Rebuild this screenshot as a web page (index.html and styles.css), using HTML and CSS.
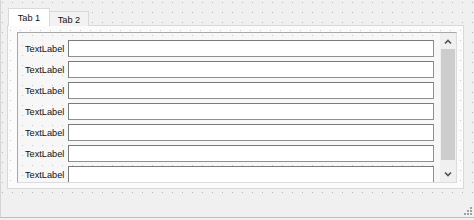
FILE: index.html
```html
<!DOCTYPE html>
<html lang="en">
  <head>
    <meta charset="UTF-8" />
    <title>Form</title>
    <link rel="stylesheet" href="styles.css">
  </head>
  <body>
    <div class="window">
      <div class="central">
        <div class="tabs">
          <div class="tabbar">
            <div class="tab tab_active">Tab 1</div>
            <div class="tab">Tab 2</div>
          </div>
          <div class="pane">
            <div class="scroll">
              <div class="scroll__content">
                <span class="label">TextLabel</span><div class="edit"></div>
                <span class="label">TextLabel</span><div class="edit"></div>
                <span class="label">TextLabel</span><div class="edit"></div>
                <span class="label">TextLabel</span><div class="edit"></div>
                <span class="label">TextLabel</span><div class="edit"></div>
                <span class="label">TextLabel</span><div class="edit"></div>
                <span class="label">TextLabel</span><div class="edit"></div>
              </div>
              <div class="scrollbar">
                <div class="scrollbar__btn">
                  <svg width="8" height="5" viewBox="0 0 8 5"><path d="M1 4.5 L4 1.5 L7 4.5" fill="none" stroke="#555" stroke-width="1.6"/></svg>
                </div>
                <div class="scrollbar__track">
                  <div class="scrollbar__thumb"></div>
                </div>
                <div class="scrollbar__btn">
                  <svg width="8" height="5" viewBox="0 0 8 5"><path d="M1 0.5 L4 3.5 L7 0.5" fill="none" stroke="#555" stroke-width="1.6"/></svg>
                </div>
              </div>
            </div>
          </div>
        </div>
      </div>
      <div class="statusbar">
        <svg class="grip" width="8" height="8" viewBox="0 0 8 8">
          <rect x="6" y="0" width="2" height="2" fill="#a0a0a0"/>
          <rect x="3" y="3" width="2" height="2" fill="#a0a0a0"/>
          <rect x="6" y="3" width="2" height="2" fill="#a0a0a0"/>
          <rect x="0" y="6" width="2" height="2" fill="#a0a0a0"/>
          <rect x="3" y="6" width="2" height="2" fill="#a0a0a0"/>
          <rect x="6" y="6" width="2" height="2" fill="#a0a0a0"/>
        </svg>
      </div>
    </div>
  </body>
</html>
```

FILE: styles.css
```css
:root {
  --bg-color: #f0f0f0;
  --grid-dot: #b9b9b9;
  --tab-border: #d9d9d9;
  --edit-border: #8f8f8f;
}

* {
  box-sizing: border-box;
  margin: 0;
  padding: 0;
}
body {
  font-family: "Liberation Sans", Arial, sans-serif;
  font-size: 9.2px;
  color: #111;
  background-color: var(--bg-color);
  width: 474px;
  height: 220px;
  overflow: hidden;
}
.window {
  width: 474px;
  height: 218px;
  display: flex;
  flex-direction: column;
  border-left: 1px solid #d4d4d4;
  border-bottom: 1px solid #bdbdbd;
}
.central {
  height: 196px;
  padding: 8px 10px 7px 6px;
  background-color: var(--bg-color);
  background-image: radial-gradient(circle at 0 0, var(--grid-dot) 1px, transparent 1px);
  background-size: 10px 10px;
  background-position: 1px 2px;
}
.tabs {
  height: 100%;
  display: flex;
  flex-direction: column;
}
.tabbar {
  display: flex;
  align-items: flex-end;
  padding-left: 1px;
  height: 18px;
  position: relative;
  z-index: 1;
  margin-bottom: -1px;
}
.tab {
  width: 39px;
  height: 15px;
  display: flex;
  align-items: center;
  justify-content: center;
  border: 1px solid var(--tab-border);
  border-left: none;
  border-bottom: none;
  background-color: #f2f2f2;
  padding-top: 1px;
}
.tab_active {
  width: 42px;
  height: 18px;
  border-left: 1px solid var(--tab-border);
  background-color: #ffffff;
  padding-top: 0;
}
.pane {
  flex: 1;
  border: 1px solid var(--tab-border);
  background-color: #fbfbfb;
  background-image: radial-gradient(circle at 0 0, #c9c9c9 1px, transparent 1px);
  background-size: 10px 10px;
  background-position: 2px 4px;
  padding: 6px 6px 5px 9px;
}
.scroll {
  height: 151px;
  display: flex;
  border: 1px solid #a8a8a8;
  border-right-color: #dcdcdc;
  border-bottom-color: #dcdcdc;
  overflow: hidden;
}
.scroll__content {
  flex: 1;
  display: grid;
  grid-template-columns: 38px 1fr;
  grid-auto-rows: 17px;
  column-gap: 5px;
  row-gap: 4px;
  align-items: center;
  padding: 7px 6px 0 7px;
  background-color: #f7f7f7;
  background-image: radial-gradient(circle at 0 0, #c9c9c9 1px, transparent 1px);
  background-size: 10px 10px;
  background-position: 4px 2px;
}
.label {
  white-space: nowrap;
}
.edit {
  height: 17px;
  background-color: #ffffff;
  border: 1px solid var(--edit-border);
  border-top-color: #7a7a7a;
  border-left-color: #7a7a7a;
}
.scrollbar {
  width: 16px;
  display: flex;
  flex-direction: column;
  background-color: #f0f0f0;
}
.scrollbar__btn {
  height: 16px;
  display: flex;
  align-items: center;
  justify-content: center;
}
.scrollbar__track {
  flex: 1;
  padding: 0 1px;
}
.scrollbar__thumb {
  height: 111px;
  background-color: #cdcdcd;
}
.statusbar {
  flex: 1;
  display: flex;
  justify-content: flex-end;
  align-items: flex-end;
  padding: 0 2px 2px 0;
}
```
